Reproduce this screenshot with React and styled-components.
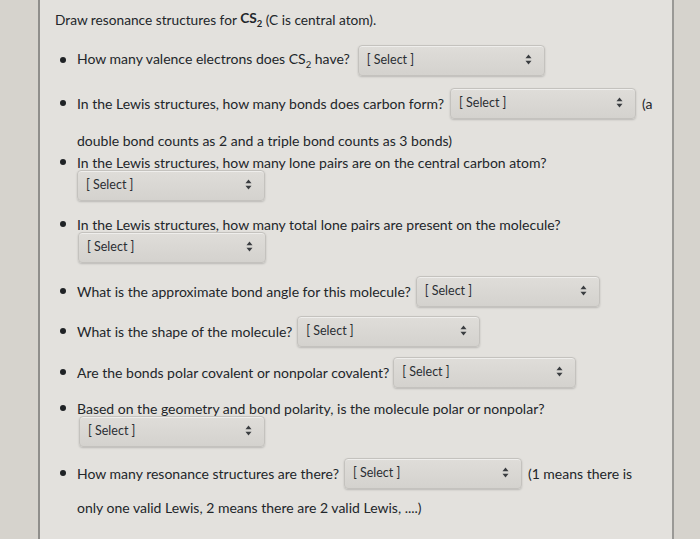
import React from 'react'
import styled, { createGlobalStyle } from 'styled-components'

const GlobalStyle = createGlobalStyle`
  html, body {
    margin: 0;
    padding: 0;
    background: #d8d5cf;
  }
  body {
    font-family: Lato, "Open Sans", "Liberation Sans", sans-serif;
    color: #22262a;
  }
`

const Screen = styled.div`
  display: flex;
  width: 700px;
  height: 539px;
  overflow: hidden;
`

const Gutter = styled.div`
  flex: 0 0 ${props => props.width}px;
  background: #d6d3cd;
`

const Panel = styled.div`
  flex: 1;
  background: #e3e1dd;
  border-left: 2px solid #8f8e8b;
  border-right: 2px solid #9a9996;
  padding: 8px 0 0 15px;
  box-sizing: border-box;
`

const Title = styled.div`
  height: 22px;
  display: flex;
  align-items: center;
  font-size: 13.7px;
`

const Sub = styled.sub`
  font-size: 9.5px;
`

const List = styled.div`
  display: flex;
  flex-direction: column;
  padding-left: 2px;
`

const Item = styled.div`
  display: grid;
  grid-template-columns: 20px 1fr;
  margin-top: ${props => props.gap}px;
`

const Bullet = styled.div`
  height: ${props => props.h}px;
  display: flex;
  align-items: center;
  &::before {
    content: '';
    width: 6px;
    height: 6px;
    margin-left: 3px;
    border-radius: 50%;
    background: #1f2225;
  }
`

const Lines = styled.div`
  display: flex;
  flex-direction: column;
`

const Line = styled.div`
  display: flex;
  align-items: center;
  height: ${props => props.h}px;
  margin-top: ${props => props.gap || 0}px;
  font-size: 14px;
  white-space: nowrap;
  gap: 4px;
`

const SelectBox = styled.div`
  display: flex;
  align-items: center;
  justify-content: space-between;
  box-sizing: border-box;
  width: ${props => props.width}px;
  height: 31px;
  margin-left: ${props => props.left || 0}px;
  padding: 0 12px 2px 8px;
  background: linear-gradient(#dfddd9, #d4d2ce);
  border: 1px solid #c4c2be;
  border-radius: 4px;
  box-shadow: 0 1px 2px rgba(0, 0, 0, 0.18), inset 0 1px 0 rgba(255, 255, 255, 0.5);
  font-size: 12.5px;
  color: #2a2e33;
`

const After = styled.span`
  margin-left: 2px;
`

function Arrows() {
  return (
    <svg width="7" height="11" viewBox="0 0 7 11">
      <path d="M3.5 0.5 L6.5 4.2 L0.5 4.2 Z" fill="#3a3d40" />
      <path d="M3.5 10.5 L6.5 6.8 L0.5 6.8 Z" fill="#3a3d40" />
    </svg>
  )
}

function Select({ width = 186, left }) {
  return (
    <SelectBox width={width} left={left}>
      <span>[ Select ]</span>
      <Arrows />
    </SelectBox>
  )
}

export default function App() {
  return (
    <Screen>
      <GlobalStyle />
      <Gutter width={38} />
      <Panel>
        <Title>
          Draw resonance structures for&nbsp;<b>CS<Sub>2</Sub></b>&nbsp;(C is central atom).
        </Title>
        <List>
          <Item gap={13}>
            <Bullet h={34} />
            <Lines>
              <Line h={34}>
                <span>How many valence electrons does CS<Sub>2</Sub> have?</span>
                <Select width={187} left={4} />
              </Line>
            </Lines>
          </Item>

          <Item gap={9}>
            <Bullet h={34} />
            <Lines>
              <Line h={34}>
                <span>In the Lewis structures, how many bonds does carbon form?</span>
                <Select width={186} left={2} />
                <After>(a</After>
              </Line>
              <Line h={22} gap={9}>double bond counts as 2 and a triple bond counts as 3 bonds)</Line>
            </Lines>
          </Item>

          <Item gap={4}>
            <Bullet h={14} />
            <Lines>
              <Line h={14}>In the Lewis structures, how many lone pairs are on the central carbon atom?</Line>
              <Line h={32}>
                <Select width={188} />
              </Line>
            </Lines>
          </Item>

          <Item gap={16}>
            <Bullet h={14} />
            <Lines>
              <Line h={14}>In the Lewis structures, how many total lone pairs are present on the molecule?</Line>
              <Line h={32}>
                <Select width={188} left={1} />
              </Line>
            </Lines>
          </Item>

          <Item gap={12}>
            <Bullet h={32} />
            <Lines>
              <Line h={32}>
                <span>What is the approximate bond angle for this molecule?</span>
                <Select width={184} left={1} />
              </Line>
            </Lines>
          </Item>

          <Item gap={8}>
            <Bullet h={32} />
            <Lines>
              <Line h={32}>
                <span>What is the shape of the molecule?</span>
                <Select width={183} left={1} />
              </Line>
            </Lines>
          </Item>

          <Item gap={9}>
            <Bullet h={32} />
            <Lines>
              <Line h={32}>
                <span>Are the bonds polar covalent or nonpolar covalent?</span>
                <Select width={183} />
              </Line>
            </Lines>
          </Item>

          <Item gap={13}>
            <Bullet h={14} />
            <Lines>
              <Line h={14}>Based on the geometry and bond polarity, is the molecule polar or nonpolar?</Line>
              <Line h={32}>
                <Select width={186} left={2} />
              </Line>
            </Lines>
          </Item>

          <Item gap={10}>
            <Bullet h={32} />
            <Lines>
              <Line h={32}>
                <span>How many resonance structures are there?</span>
                <Select width={178} left={1} />
                <After>(1 means there is</After>
              </Line>
              <Line h={22} gap={7}>only one valid Lewis, 2 means there are 2 valid Lewis, ....)</Line>
            </Lines>
          </Item>
        </List>
      </Panel>
      <Gutter width={26} />
    </Screen>
  )
}
